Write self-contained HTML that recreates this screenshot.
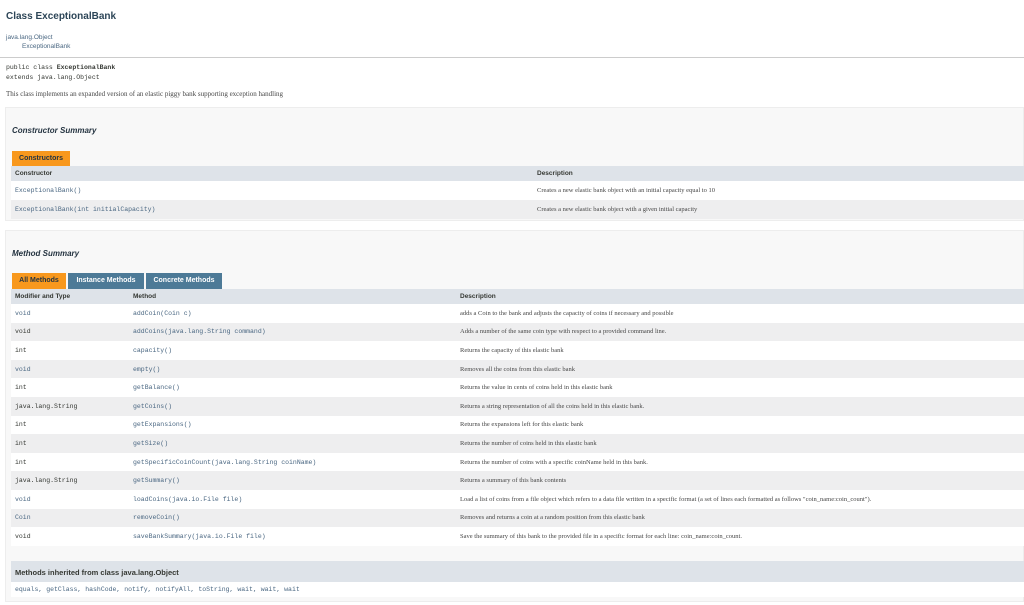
<!DOCTYPE html>
<html><head><meta charset="utf-8"><style>
*{margin:0;padding:0;box-sizing:border-box}
body{width:1024px;height:605px;background:#fff;font-family:"Liberation Sans",sans-serif;color:#353833;position:relative;overflow:hidden}
.abs{position:absolute}
.mono{font-family:"Liberation Mono",monospace}
.serif{font-family:"Liberation Serif",serif}
h1{position:absolute;left:6px;top:11px;font-size:10px;font-weight:bold;color:#2c4557}
.box{position:absolute;left:5px;right:0;background:#f8f8f8;border:1px solid #ededed}
.h3{position:absolute;font-size:8px;font-style:italic;font-weight:bold;color:#253441}
table{position:absolute;border-collapse:collapse;width:1013px;table-layout:fixed}
td,th{font-size:6.5px;padding:0 0 0 4px;text-align:left;white-space:nowrap;overflow:hidden;vertical-align:middle}
th{background:#dee3e9;font-family:"Liberation Sans",sans-serif;font-weight:bold;color:#353833;height:15px}
tr:nth-child(even) td{background:#fff}
tr:nth-child(odd) td{background:#eeeeef}
td.m{font-family:"Liberation Mono",monospace;color:#4A6782}
td.t{font-family:"Liberation Mono",monospace;color:#353833}
td.d{font-family:"Liberation Serif",serif;color:#474747}
.tab{position:absolute;height:16px;font-size:7px;font-weight:bold;color:#fff;padding:4px 0 0;text-align:center;white-space:nowrap}
</style></head><body>
<h1>Class ExceptionalBank</h1>
<div class="abs" style="left:6px;top:34px;font-size:6.5px;color:#4A6782">java.lang.Object</div>
<div class="abs" style="left:22px;top:43px;font-size:6.5px;color:#4A6782">ExceptionalBank</div>
<div class="abs" style="left:0;right:0;top:57px;border-top:1px solid #ccc"></div>
<div class="abs mono" style="left:6px;top:63px;font-size:6.5px;line-height:10px">public class <b>ExceptionalBank</b><br>extends java.lang.Object</div>
<div class="abs serif" style="left:6px;top:90px;font-size:7px;color:#474747">This class implements an expanded version of an elastic piggy bank supporting exception handling</div>

<div class="box" style="top:107px;height:114px"></div>
<div class="h3" style="left:12px;top:126px">Constructor Summary</div>
<div class="tab" style="left:12px;top:151px;width:58px;height:15px;background:#f8981d;color:#253441">Constructors</div>
<table style="left:11px;top:166px">
<colgroup><col style="width:522px"><col></colgroup>
<tr><th>Constructor</th><th>Description</th></tr>
<tr style="height:19px"><td class="m">ExceptionalBank()</td><td class="d">Creates a new elastic bank object with an initial capacity equal to 10</td></tr>
<tr style="height:19px"><td class="m">ExceptionalBank(int initialCapacity)</td><td class="d">Creates a new elastic bank object with a given initial capacity</td></tr>
</table>

<div class="box" style="top:230px;height:372px"></div>
<div class="h3" style="left:12px;top:249px">Method Summary</div>
<div class="tab" style="left:12px;top:273px;width:54px;background:#f8981d;color:#253441">All Methods</div>
<div class="tab" style="left:68px;top:273px;width:76px;background:#4d7a97">Instance Methods</div>
<div class="tab" style="left:146px;top:273px;width:76px;background:#4d7a97">Concrete Methods</div>
<table style="left:11px;top:289px">
<colgroup><col style="width:118px"><col style="width:327px"><col></colgroup>
<tr><th>Modifier and Type</th><th>Method</th><th>Description</th></tr>
<tr style="height:18.6px"><td class="m">void</td><td class="m">addCoin(Coin c)</td><td class="d">adds a Coin to the bank and adjusts the capacity of coins if necessary and possible</td></tr>
<tr style="height:18.6px"><td class="t">void</td><td class="m">addCoins(java.lang.String command)</td><td class="d">Adds a number of the same coin type with respect to a provided command line.</td></tr>
<tr style="height:18.6px"><td class="t">int</td><td class="m">capacity()</td><td class="d">Returns the capacity of this elastic bank</td></tr>
<tr style="height:18.6px"><td class="m">void</td><td class="m">empty()</td><td class="d">Removes all the coins from this elastic bank</td></tr>
<tr style="height:18.6px"><td class="t">int</td><td class="m">getBalance()</td><td class="d">Returns the value in cents of coins held in this elastic bank</td></tr>
<tr style="height:18.6px"><td class="t">java.lang.String</td><td class="m">getCoins()</td><td class="d">Returns a string representation of all the coins held in this elastic bank.</td></tr>
<tr style="height:18.6px"><td class="t">int</td><td class="m">getExpansions()</td><td class="d">Returns the expansions left for this elastic bank</td></tr>
<tr style="height:18.6px"><td class="t">int</td><td class="m">getSize()</td><td class="d">Returns the number of coins held in this elastic bank</td></tr>
<tr style="height:18.6px"><td class="t">int</td><td class="m">getSpecificCoinCount(java.lang.String coinName)</td><td class="d">Returns the number of coins with a specific coinName held in this bank.</td></tr>
<tr style="height:18.6px"><td class="t">java.lang.String</td><td class="m">getSummary()</td><td class="d">Returns a summary of this bank contents</td></tr>
<tr style="height:18.6px"><td class="m">void</td><td class="m">loadCoins(java.io.File file)</td><td class="d">Load a list of coins from a file object which refers to a data file written in a specific format (a set of lines each formatted as follows "coin_name:coin_count").</td></tr>
<tr style="height:18.6px"><td class="m">Coin</td><td class="m">removeCoin()</td><td class="d">Removes and returns a coin at a random position from this elastic bank</td></tr>
<tr style="height:18.6px"><td class="t">void</td><td class="m">saveBankSummary(java.io.File file)</td><td class="d">Save the summary of this bank to the provided file in a specific format for each line: coin_name:coin_count.</td></tr>
</table>
<div class="abs" style="left:11px;right:0;top:561px;height:21px;background:#dee3e9;font-size:7.5px;font-weight:bold;padding:7px 0 0 4px">Methods inherited from class java.lang.Object</div>
<div class="abs mono" style="left:11px;right:0;top:582px;height:15px;background:#fff;font-size:6.5px;padding:4px 0 0 4px;color:#4A6782">equals, getClass, hashCode, notify, notifyAll, toString, wait, wait, wait</div>
</body></html>
